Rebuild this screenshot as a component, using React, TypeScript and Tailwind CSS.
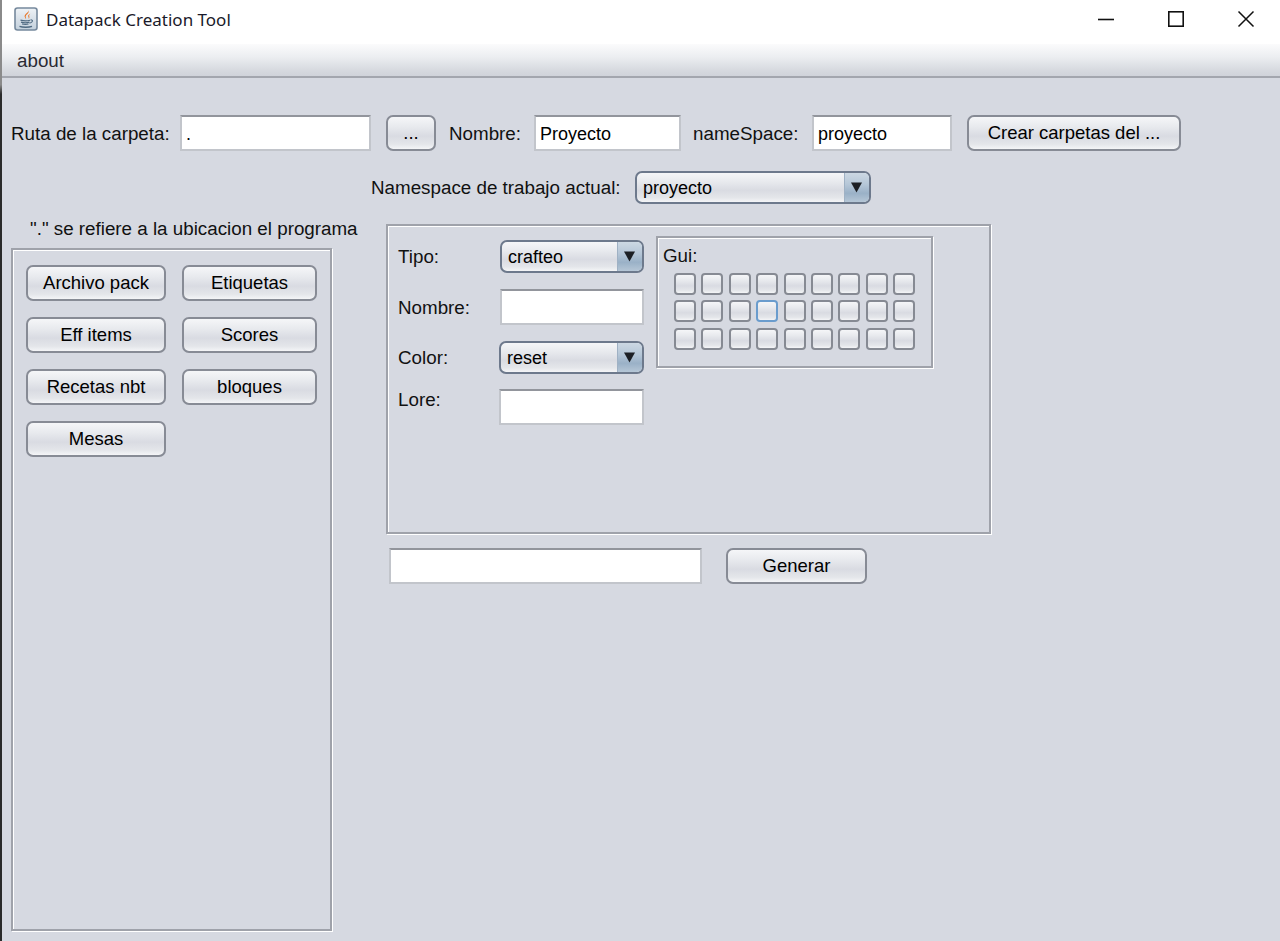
import React from "react";

const btnFace =
  "bg-[linear-gradient(180deg,#f5f6f8_0%,#e8eaee_30%,#d9dbe2_60%,#e4e6ea_85%,#f4f5f7_100%)]";

function Btn({ label, className = "" }: { label?: string; className?: string }) {
  return (
    <div
      className={`flex h-[36px] shrink-0 items-center justify-center rounded-[7px] border-2 border-[#878b95] text-[18.5px] text-black ${btnFace} ${className}`}
    >
      {label}
    </div>
  );
}

function Field({ value = "", className = "" }: { value?: string; className?: string }) {
  return (
    <div
      className={`flex h-[36px] shrink-0 items-center border-2 border-[#c2c5cb] border-t-[#92959c] bg-white pl-[4px] pt-[1px] text-[18px] text-black ${className}`}
    >
      {value}
    </div>
  );
}

function Combo({ value, className = "" }: { value: string; className?: string }) {
  return (
    <div
      className={`flex h-[33px] shrink-0 items-stretch overflow-hidden rounded-[7px] border-2 border-[#6d798c] ${btnFace} ${className}`}
    >
      <div className="flex flex-1 items-center pl-[6px] pt-[1px] text-[18px] text-black">{value}</div>
      <div className="flex w-[25px] items-center justify-center border-l border-[#9fb1c4] bg-[linear-gradient(180deg,#ccd8e3_0%,#b5c6d7_40%,#9ab1c7_70%,#b5c6d6_100%)] pr-[2px]">
        <svg width="11" height="11" viewBox="0 0 11 11">
          <polygon points="0,0.5 11,0.5 5.5,10.5" fill="#1c1f24" />
        </svg>
      </div>
    </div>
  );
}

const etched = "border-2 border-[#9fa2aa] shadow-[inset_1px_1px_0_#ffffff,1px_1px_0_#ffffff]";

function GuiCell({ focused }: { focused?: boolean }) {
  return (
    <div
      className={`h-[22px] w-[22px] rounded-[4px] border-2 ${btnFace} ${
        focused ? "border-[#6a9ccd]" : "border-[#868a93]"
      }`}
    />
  );
}

function JavaIcon() {
  return (
    <svg width="24" height="24" viewBox="0 0 24 24" className="shrink-0">
      <defs>
        <linearGradient id="jbg" x1="0" y1="0" x2="0" y2="1">
          <stop offset="0" stopColor="#eef2f6" />
          <stop offset="1" stopColor="#c3d0dc" />
        </linearGradient>
      </defs>
      <rect x="1" y="1" width="22" height="22" rx="2.5" fill="url(#jbg)" stroke="#76899d" strokeWidth="1.6" />
      <path d="M14.5 3c.8 2.6-4.6 4-3.8 6.8.3 1 1 1.6 1.4 2.4.2-1.8-1.2-2.6 0-4 1.2-1.4 3.4-2.4 2.4-5.2z" fill="#e96f1c" />
      <path d="M16.6 6.4c-2 .9-2.8 1.9-2.2 3.4.2.6.5 1.1.2 2 1.1-1 .8-2.1.6-2.9-.2-.9.4-1.7 1.4-2.5z" fill="#e96f1c" />
      <path d="M6.5 13.2c2.5.6 7.5.6 9.5 0M7 15.2c2 .5 6.5.5 8.5 0M8 17c1.800.4 5 .4 6.5 0" stroke="#4f6a82" strokeWidth="1.2" fill="none" />
      <path d="M16.5 13c2.600-.6 3 2.300-1 3.200" stroke="#4f6a82" strokeWidth="1.1" fill="none" />
      <path d="M5.500 19.400c3 1.100 9.500 1.100 12.500 0" stroke="#4f6a82" strokeWidth="1.3" fill="none" />
    </svg>
  );
}

export default function App() {
  return (
    <div className="h-[941px] w-[1280px] overflow-hidden bg-[linear-gradient(180deg,#8a8a8a_0%,#8a8a8a_9%,#2b2b2b_10%,#2b2b2b_100%)] pl-[2px] font-['Liberation_Sans',Arial,sans-serif] text-[18.8px] leading-none text-[#111]">
      <div className="flex h-full flex-col bg-[#d6d9e1]">
        {/* Title bar */}
        <div className="flex h-[44px] shrink-0 items-center bg-white pb-[6px] pl-[12px] pr-[25px]">
          <JavaIcon />
          <span className="ml-[8px] font-['Noto_Sans',sans-serif] text-[17px] text-[#1a1a2a]">Datapack Creation Tool</span>
          <div className="ml-auto flex items-center gap-[52px]">
            <svg width="18" height="18" viewBox="0 0 18 18">
              <line x1="1" y1="9.5" x2="17" y2="9.5" stroke="#111" strokeWidth="1.6" />
            </svg>
            <svg width="18" height="18" viewBox="0 0 18 18">
              <rect x="1.8" y="1.8" width="14.4" height="14.4" fill="none" stroke="#111" strokeWidth="1.6" />
            </svg>
            <svg width="18" height="18" viewBox="0 0 18 18">
              <path d="M1.5 1.5 16.5 16.5M16.5 1.5 1.5 16.5" fill="none" stroke="#111" strokeWidth="1.5" />
            </svg>
          </div>
        </div>

        {/* Menu bar */}
        <div className="flex h-[34px] shrink-0 items-center border-b-2 border-[#a3a6ae] bg-[linear-gradient(180deg,#fbfbfc_0%,#eceef1_40%,#d5d8de_85%,#d0d3da_100%)] pl-[15px] pt-[2px] text-[#2a2a33]">
          about
        </div>

        {/* Path row */}
        <div className="mt-[37px] flex items-center pl-[9px]">
          <span className="w-[169px] shrink-0 pt-[2px]">Ruta de la carpeta:</span>
          <Field value="." className="w-[191px]" />
          <Btn label="..." className="ml-[15px] w-[50px]" />
          <span className="ml-[13px] w-[85px] shrink-0 pt-[2px]">Nombre:</span>
          <Field value="Proyecto" className="w-[147px]" />
          <span className="ml-[12px] w-[119px] shrink-0 pt-[2px]">nameSpace:</span>
          <Field value="proyecto" className="w-[140px]" />
          <Btn label="Crear carpetas del ..." className="ml-[15px] w-[214px]" />
        </div>

        {/* Namespace row */}
        <div className="mt-[19px] flex h-[34px] items-center pl-[369px]">
          <span className="w-[264px] shrink-0 pt-[2px]">Namespace de trabajo actual:</span>
          <Combo value="proyecto" className="w-[236px]" />
        </div>

        {/* Main */}
        <div className="mt-[20px] flex min-h-0 flex-1 items-start pl-[9px]">
          <div className="w-[321px] shrink-0">
            <div className="-mt-[5px] h-[29px] whitespace-nowrap pl-[19px] pt-[1px]">"." se refiere a la ubicacion el programa</div>
            <div className={`grid h-[683px] grid-cols-[140px_135px] content-start gap-x-[16px] gap-y-[16px] pl-[13px] pt-[15px] ${etched}`}>
              <Btn label="Archivo pack" />
              <Btn label="Etiquetas" />
              <Btn label="Eff items" />
              <Btn label="Scores" />
              <Btn label="Recetas nbt" />
              <Btn label="bloques" />
              <Btn label="Mesas" />
            </div>
          </div>

          <div className="ml-[54px] w-[605px] shrink-0">
            <div className={`flex h-[310px] items-start pl-[10px] pt-[10px] ${etched}`}>
              <div className="w-[246px] shrink-0">
                <div className="mt-[4px] flex h-[33px] items-center">
                  <span className="w-[102px] shrink-0 pt-[2px]">Tipo:</span>
                  <Combo value="crafteo" className="w-[144px]" />
                </div>
                <div className="mt-[16px] flex h-[36px] items-center">
                  <span className="w-[102px] shrink-0 pt-[2px]">Nombre:</span>
                  <Field className="w-[144px]" />
                </div>
                <div className="mt-[16px] flex h-[33px] items-center">
                  <span className="w-[101px] shrink-0 pt-[1px]">Color:</span>
                  <Combo value="reset" className="w-[145px]" />
                </div>
                <div className="mt-[15px] flex h-[36px] items-start">
                  <span className="w-[101px] shrink-0 pt-[2px]">Lore:</span>
                  <Field className="w-[145px]" />
                </div>
              </div>
              <div className={`ml-[12px] h-[132px] w-[277px] shrink-0 pl-[5px] pt-[9px] ${etched}`}>
                <div className="h-[26px]">Gui:</div>
                <div className="ml-[11px] grid grid-cols-[repeat(9,22px)] gap-x-[5.4px] gap-y-[5.4px]">
                  {Array.from({ length: 27 }, (_, i) => (
                    <GuiCell key={i} focused={i === 12} />
                  ))}
                </div>
              </div>
            </div>
            <div className="mt-[14px] flex items-center pl-[3px]">
              <Field className="w-[313px]" />
              <Btn label="Generar" className="ml-[24px] w-[141px]" />
            </div>
          </div>
        </div>
      </div>
    </div>
  );
}
